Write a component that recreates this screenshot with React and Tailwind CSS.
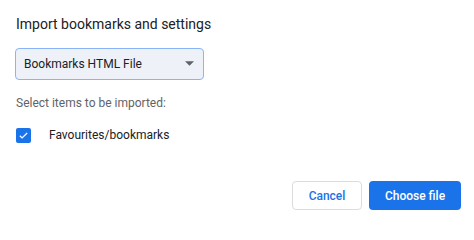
export default function App() {
  return (
    <div className="w-[474px] h-[221px] bg-white flex flex-col px-4 pt-[14px] font-['Roboto',sans-serif] text-[#202124]">
      <h1 className="text-[14px] leading-[20px]">Import bookmarks and settings</h1>
      <div className="mt-[14px] w-[189px] h-[32px] ml-[-1px] rounded-[4px] border border-[#8ab4f8] bg-[#eef2f8] flex items-center justify-between pl-[8px] pr-[9px] pb-[1px]">
        <span className="text-[12px]">Bookmarks HTML File</span>
        <svg width="9" height="5" viewBox="0 0 10 5">
          <path d="M0 0h10L5 5z" fill="#5f6368" />
        </svg>
      </div>
      <p className="mt-[15px] text-[12px] leading-[16px] text-[#5f6368]">Select items to be imported:</p>
      <div className="mt-[15px] flex items-center">
        <div className="w-[15px] h-[15px] rounded-[2px] bg-[#1a73e8] flex items-center justify-center">
          <svg width="11" height="11" viewBox="0 0 24 24">
            <path d="M4 12.5l5 5L20 6.5" fill="none" stroke="white" strokeWidth="2.6" />
          </svg>
        </div>
        <span className="ml-[18px] text-[12px]">Favourites/bookmarks</span>
      </div>
      <div className="mt-auto mb-[11px] mr-[-3px] flex justify-end gap-[7px]">
        <button className="w-[70px] h-[29px] rounded-[4px] border border-[#dadce0] bg-white text-[#1a73e8] text-[12px] font-medium">Cancel</button>
        <button className="w-[92px] h-[29px] rounded-[4px] bg-[#1a73e8] text-white text-[12px] font-medium">Choose file</button>
      </div>
    </div>
  );
}
